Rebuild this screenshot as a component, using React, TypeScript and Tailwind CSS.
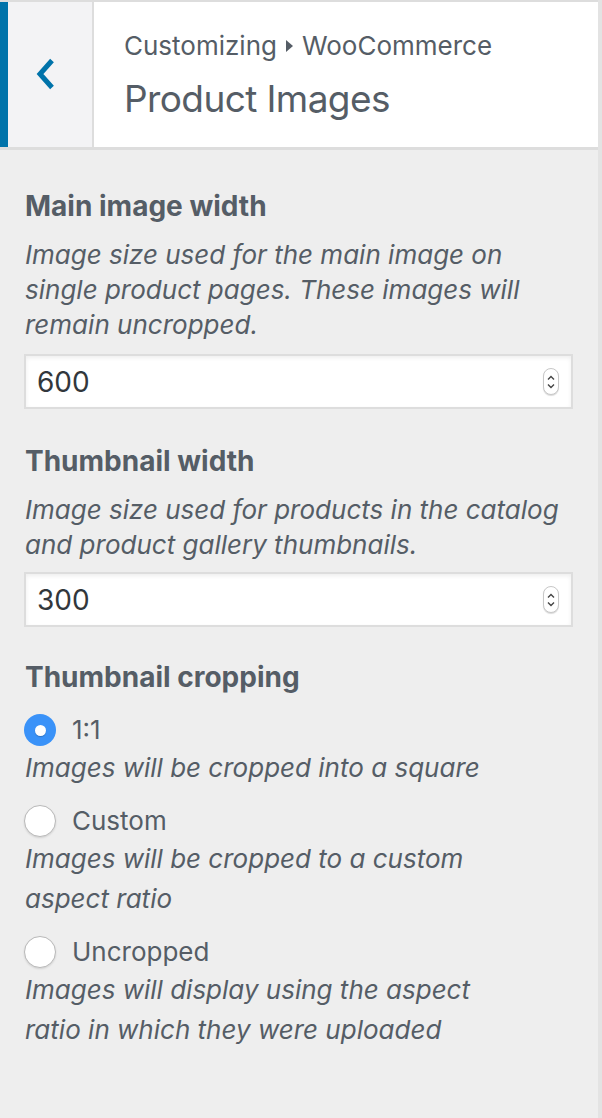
import { useState } from 'react';

const font = { fontFamily: 'Inter, "Open Sans", sans-serif' };

function NumberField({ value }: { value: string }) {
  return (
    <div className="flex h-[55px] w-[549px] items-center justify-between border-2 border-[#dddddd] bg-white pl-[11px] pr-[12px] shadow-[inset_0_2px_4px_rgba(0,0,0,0.07)]">
      <span className="text-[28px] leading-none text-[#32373c]">{value}</span>
      <span className="flex h-[27px] w-[16px] flex-col items-center justify-center rounded-full border border-[#c8c8c8] bg-white shadow-[0_1px_1px_rgba(0,0,0,0.15)]">
        <svg width="8" height="18" viewBox="0 0 8 18" fill="none" stroke="#444" strokeWidth="1.4">
          <path d="M1 6.5 L4 3.5 L7 6.5" />
          <path d="M1 11.5 L4 14.5 L7 11.5" />
        </svg>
      </span>
    </div>
  );
}

function Radio({ checked, label, onClick }: { checked: boolean; label: string; onClick: () => void }) {
  return (
    <button onClick={onClick} className="flex h-[36px] items-center gap-4 text-left">
      {checked ? (
        <span className="flex h-[32px] w-[32px] items-center justify-center rounded-full bg-[#3a92f8]">
          <span className="h-[11px] w-[11px] rounded-full bg-white shadow-[0_1px_1px_rgba(0,0,0,0.2)]" />
        </span>
      ) : (
        <span className="h-[32px] w-[32px] rounded-full border border-[#b9b9b9] bg-white shadow-[0_1px_2px_rgba(0,0,0,0.12)]" />
      )}
      <span className="text-[26px] leading-[36px] text-[#555d66]">{label}</span>
    </button>
  );
}

export default function App() {
  const [crop, setCrop] = useState('1:1');

  const options = [
    { key: '1:1', label: '1:1', desc: 'Images will be cropped into a square' },
    { key: 'custom', label: 'Custom', desc: 'Images will be cropped to a custom aspect ratio' },
    { key: 'uncropped', label: 'Uncropped', desc: 'Images will display using the aspect ratio in which they were uploaded' },
  ];

  return (
    <div style={font} className="min-h-[1118px] w-[602px] border-r-4 border-[#e3e3e3] bg-[#eeeeee]">
      {/* header */}
      <div className="flex h-[150px] border-t-2 border-b-[3px] border-[#dddddd] bg-white">
        <div className="w-[8px] bg-[#0073aa]" />
        <button className="flex w-[86px] items-center justify-center border-r-2 border-[#dddddd] bg-[#f3f3f5] pr-[10px] pb-[2px]">
          <svg width="20" height="32" viewBox="0 0 20 32" fill="none" stroke="#0073aa" strokeWidth="5">
            <path d="M17 2.5 L5 16 L17 29.5" />
          </svg>
        </button>
        <div className="flex flex-col pl-[30px] pt-[26px]">
          <div className="flex items-center text-[26px] leading-[36px] text-[#555d66]">
            <span>Customizing</span>
            <svg className="mx-[8px]" width="9" height="14" viewBox="0 0 9 14">
              <path d="M1 1 L8 7 L1 13 Z" fill="#555d66" />
            </svg>
            <span>WooCommerce</span>
          </div>
          <h1 className="mt-[11px] text-[37px] leading-[48px] tracking-[-0.6px] text-[#555d66]">Product Images</h1>
        </div>
      </div>

      {/* body */}
      <div className="px-6 pt-[38px] text-[#555d66]">
        <h2 className="pl-px text-[28px] font-bold leading-[36px]">Main image width</h2>
        <p className="mt-[13px] w-[549px] pl-px text-[26px] italic leading-[35px]">
          Image size used for the main image on single product pages. These images will remain uncropped.
        </p>
        <div className="mt-[12px]">
          <NumberField value="600" />
        </div>

        <h2 className="mt-[34px] pl-px text-[28px] font-bold leading-[36px]">Thumbnail width</h2>
        <p className="mt-[13px] w-[549px] pl-px text-[26px] italic leading-[35px]">
          Image size used for products in the catalog and product gallery thumbnails.
        </p>
        <div className="mt-[10px]">
          <NumberField value="300" />
        </div>

        <h2 className="mt-[32px] pl-px text-[28px] font-bold leading-[36px]">Thumbnail cropping</h2>
        <div className="mt-[17px] flex flex-col">
          {options.map((o, i) => (
            <div key={o.key} className={i > 0 ? 'mt-[15px]' : ''}>
              <Radio checked={crop === o.key} label={o.label} onClick={() => setCrop(o.key)} />
              <p className="w-[480px] pl-px text-[26px] italic leading-[40px]">{o.desc}</p>
            </div>
          ))}
        </div>
      </div>
    </div>
  );
}
